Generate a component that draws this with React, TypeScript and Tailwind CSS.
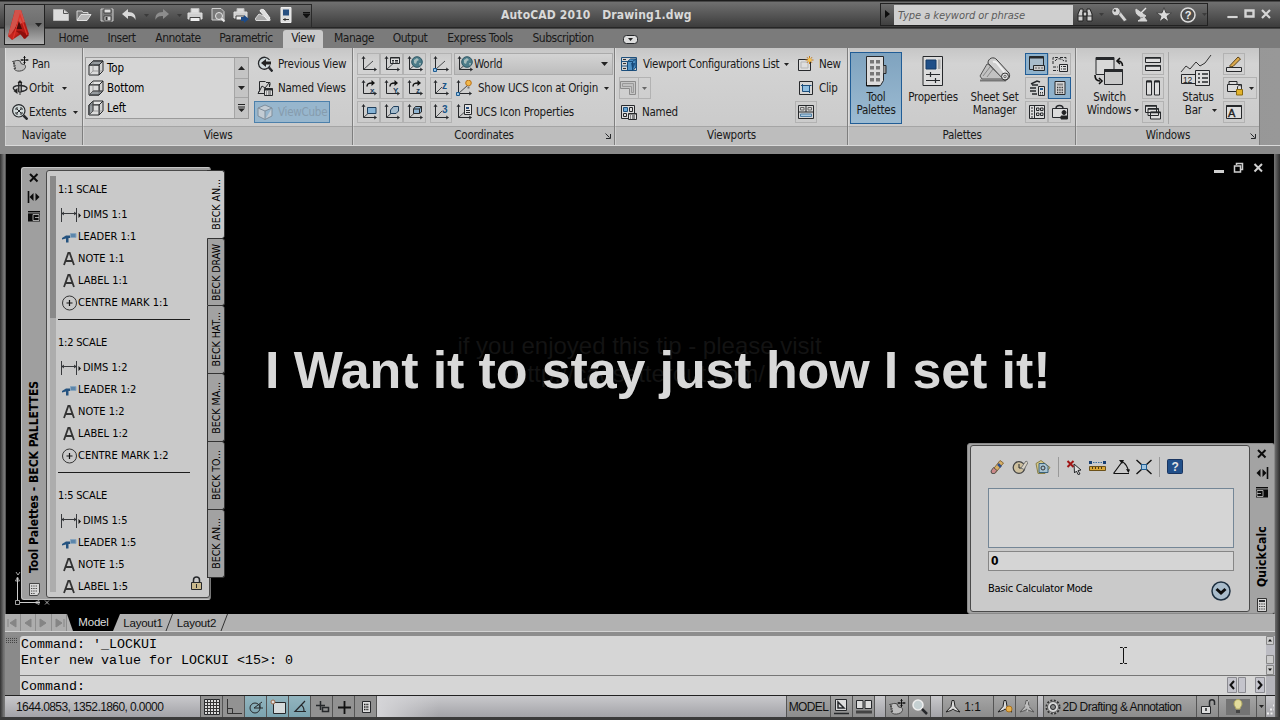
import type { ReactNode } from "react";

type IconProps = { w?: number; h?: number; className?: string; children?: ReactNode };

/* ------------------ ICON BASE ------------------ */
function Ico({ w = 16, h = 16, className = "", children }: IconProps) {
  return (
    <svg
      width={w}
      height={h}
      viewBox={`0 0 ${w} ${h}`}
      fill="none"
      stroke="#26282b"
      className={`shrink-0 ${className}`}
    >
      {children}
    </svg>
  );
}

function Caret({ className = "" }: { className?: string }) {
  return (
    <svg width="5" height="3" viewBox="0 0 5 3" className={`shrink-0 ${className}`}>
      <path d="M0 0h5L2.5 3z" fill="#222" />
    </svg>
  );
}

/* ------------------ QUICK ACCESS ICONS ------------------ */
const NewFile = () => (
  <Ico>
    <path d="M.5 2.500h10l5 4v7H.5z" fill="#dcdcdc" stroke="#bbb" />
    <path d="M10.500 2.500v4h5" stroke="#555" />
  </Ico>
);
const OpenFile = () => (
  <Ico>
    <path d="M1 13V4h5l1 1.500h5V8" fill="#777" stroke="#d5d5d5" />
    <path d="M1 13.500L5 7.500h10l-4 6z" fill="#b9b9b9" stroke="#e2e2e2" />
  </Ico>
);
const SaveFile = () => (
  <Ico>
    <path d="M2 2h12v12H2z" fill="#777" stroke="#ccc" />
    <path d="M5 2h7v4H5zM5 9h7v5H5z" fill="#ddd" stroke="#444" />
    <path d="M6.500 10h2v3h-2z" fill="#333" stroke="none" />
  </Ico>
);
const Undo = () => (
  <Ico>
    <path d="M1 7l6-5v3c6 0 8 3 7.500 8C13 9.500 11 9 7 9v3z" fill="#d8d8d8" stroke="none" />
  </Ico>
);
const Redo = () => (
  <Ico>
    <path d="M15 7L9 2v3C3 5 1 8 1.500 13 3 9.500 5 9 9 9v3z" fill="#8d8d8d" stroke="none" />
  </Ico>
);
const Printer = () => (
  <Ico>
    <path d="M4 1.500h8V6H4z" fill="#e0e0e0" stroke="#bbb" />
    <path d="M1 6h14v6H1z" fill="#cfcfcf" stroke="#e2e2e2" />
    <path d="M3 10.500h10v4H3z" fill="#eee" stroke="#444" />
  </Ico>
);
const Preview = () => (
  <Ico>
    <path d="M2 1.500h9l3 3V13H2z" fill="#777" stroke="#d0d0d0" />
    <circle cx="9" cy="9" r="3.500" fill="#888" stroke="#e6e6e6" />
    <path d="M11.500 11.500l3 3" stroke="#e6e6e6" strokeWidth="2" />
  </Ico>
);
const Publish = () => (
  <Ico>
    <path d="M4 1.500h7V5H4z" fill="#ddd" stroke="#bbb" />
    <path d="M1 5h13v6H1z" fill="#cfcfcf" stroke="#e2e2e2" />
    <path d="M3 9h8v4H3z" fill="#eee" stroke="#444" />
    <path d="M8 10h3V8l5 4-5 4v-2H8z" fill="#1d4a86" stroke="none" />
  </Ico>
);
const SheetSetSmall = () => (
  <Ico>
    <path d="M0 12l4-5 11 5v1.500H1z" fill="#a8a8a8" stroke="#dadada" />
    <path d="M5 4c0-2 3-2 4-1l6 8-2 2.500z" fill="#ddd" stroke="#f0f0f0" />
  </Ico>
);
const PropsSmall = () => (
  <Ico w={14}>
    <path d="M2 .5h10v15H2z" fill="#ddd" stroke="#eee" />
    <path d="M4 2.500h6v6H4z" fill="#274f80" stroke="none" />
    <path d="M4 12.500h6M6 11v3" stroke="#333" />
  </Ico>
);

/* ------------------ RIBBON ICONS ------------------ */
const Hand = () => (
  <>
    <path
      d="M.5 5.500L3 5c2-1 4-.5 5 0l1.500 3 3 .5c1 1 1.500 2.500.5 4-1.500 2-5 3-7.500 2.500-1.500-.5-3-1-3.500-2.500l2-.2L1.500 10l2-.2L1 7.500l2-.2z"
      fill="#bdbdbd"
      stroke="#444"
    />
    <path d="M12.500 0v8M8.500 4h8M11.500 1.500h2M11.500 6.500h2M10 3v2M15 3v2" stroke="#111" />
  </>
);
const Pan = () => (
  <Ico w={17}>
    <Hand />
  </Ico>
);
const Orbit = () => (
  <Ico>
    <path d="M8 2v13M6.500 2h3v10h-3z" fill="#d8d8d8" stroke="#222" strokeWidth=".9" />
    <path d="M5.500 3L8 0l2.500 3z" fill="#222" stroke="none" />
    <path d="M3.500 10.500C-1 8 2 5.500 8 5.500s10 3 4 5.500l-3 .5" strokeWidth="1.300" />
    <path d="M5.500 8v6L1.500 11z" fill="#222" stroke="none" />
  </Ico>
);
const Extents = () => (
  <Ico>
    <circle cx="6.800" cy="6.800" r="6.200" fill="#d2dada" strokeWidth="1.200" />
    <path d="M4 6V4h2M8 4h2v2M10 8v2H8M6 10H4V8M5 5l4 4M9 5L5 9" />
    <path d="M11.500 11.500l4 4" strokeWidth="2.500" />
  </Ico>
);
const CUBE_FACE = {
  top: "M1 5L5 1h10l-4 4z",
  bottom: "M1 15l4-4h10l-4 4z",
  left: "M1 5l4-4v10l-4 4z",
};
function Cube({ face }: { face: keyof typeof CUBE_FACE }) {
  return (
    <Ico>
      <path d="M1 5L5 1h10l-4 4z" fill="#e4e4e4" />
      <path d="M11 5l4-4v10l-4 4z" fill="#d2d2d2" />
      <path d="M1 5h10v10H1z" fill="#dcdcdc" />
      <path d={CUBE_FACE[face]} fill="#858b90" fillOpacity=".8" />
      <path d="M5 1v10h10M5 11l-4 4" stroke="#777" strokeWidth=".6" />
    </Ico>
  );
}
const PrevView = () => (
  <Ico>
    <path d="M12.500 4A6 6 0 1 0 13 9.500" fill="#d0dadd" strokeWidth="1.300" />
    <path d="M4 7l5-4v2.500h5v3H9V11z" fill="#222" stroke="none" />
    <path d="M12 11.500l3.500 4" strokeWidth="2.500" />
  </Ico>
);
const NamedViews = () => (
  <Ico>
    <path d="M7 13.500H1l1.500-3V1.500h6M12.500 4v3" />
    <path d="M2 12l3-6 3 2 4-5M9 2.500h4v3" />
    <path d="M7.500 8.500h8v7h-8z" fill="#ddd" />
    <path d="M7.500 9.500h8" strokeWidth="2" />
    <path d="M9 12h1M11 12h3M9 14h1M11 14h3" strokeWidth=".8" />
  </Ico>
);
const ViewCubeIcon = () => (
  <Ico>
    <path d="M1 4l7-3 7 3-7 3zM1 4v8l7 3.500V7M15 4v8l-7 3.500" fill="#c3ccd4" stroke="#7f8e9c" />
  </Ico>
);
const Globe = ({ cx, cy, r }: { cx: number; cy: number; r: number }) => (
  <>
    <circle cx={cx} cy={cy} r={r} fill="#4c7c89" stroke="#2e5866" />
    <path
      d={`M${cx - 3} ${cy - 2}l3-2 2 2-2 1-1 3-2-1zM${cx + 2} ${cy + 1}l2 0-1 3z`}
      fill="#a6bcbc"
      stroke="none"
    />
  </>
);

const UCS_EXTRA: Record<string, ReactNode> = {
  plain: null,
  named: (
    <>
      <path d="M6.500 1.500h9v6h-9z" fill="#e2e2e2" />
      <path d="M6.500 2h9M8 4.500h2M11 4.500h3M8 6h2M11 6h3" />
    </>
  ),
  world: <Globe cx={10} cy={6} r={5.300} />,
  origin: <path d="M.5 12.500h3v3h-3z" fill="#9fc4e0" stroke="#1d5c93" />,
  view: <path d="M6.500 3.500h8.500v6H6.500z" fill="#86b3d6" stroke="#1f3f5c" />,
  object: <path d="M6.500 6l3-3.500h5v4.500L12 9.500H6.500z" fill="#a5bccd" stroke="#1f3f5c" />,
  face: <path d="M6.500 5l2-2.500h6V8l-2 1.500h-6zM6.500 5h6v4.500M12.500 5l2-2.500" fill="#8fb4d2" />,
  show: (
    <>
      <path d="M.5 12.500h3v3h-3z" fill="#9fc4e0" stroke="#1d5c93" />
      <circle cx="12.500" cy="3" r="2.800" fill="#f2b84a" stroke="#b9731b" />
      <path d="M11.500 6.500h2v2h-2z" fill="#777" stroke="none" />
    </>
  ),
  props: (
    <>
      <path d="M8.500.5h7v10h-7z" fill="#e2e2e2" />
      <path d="M10 3h3v2h-3z" fill="#274f80" stroke="none" />
      <path d="M10 6.500h4M10 8.500h4" />
    </>
  ),
};
const Axes = () => (
  <>
    <path d="M2.500 1v12.500H15" />
    <path d="M1 3L2.500.5 4 3M13 12l2.500 1.500L13 15" strokeWidth=".9" />
  </>
);
function Ucs({ kind }: { kind: string }) {
  return (
    <Ico>
      <Axes />
      <path d="M2.500 13.500L12 5" strokeWidth=".8" />
      {UCS_EXTRA[kind]}
    </Ico>
  );
}
function UcsLetter({ letter, rotate }: { letter: string; rotate?: boolean }) {
  return (
    <Ico>
      <Axes />
      {rotate ? (
        <>
          <path d="M6 6.500c0-3 1.500-3.500 5-3.500" stroke="#111" strokeWidth="1.500" />
          <path d="M10.500 0l3.500 3-3.500 3z" fill="#111" stroke="none" />
        </>
      ) : (
        <path d="M2.500 13.500L9 7" strokeWidth=".8" />
      )}
      <text
        x={rotate ? 9 : 9}
        y={rotate ? 12.500 : 8.500}
        fontSize={rotate ? 8 : 10}
        fontWeight="bold"
        fontFamily="Liberation Sans"
        fill={rotate ? "#24425f" : "#1c5588"}
        stroke="none"
      >
        {letter}
      </text>
    </Ico>
  );
}

const VpConfig = () => (
  <Ico>
    <path d="M.5 1.500h15v13H.5zM.5 5.500h6M.5 10h6" fill="#d4d4d4" stroke="#1d4f7c" />
    <path d="M2 3.500h3M2 7.500h3M2 12.500h3" stroke="#333" />
    <path d="M6.500 5.500L9.500 3H15v8l-3 3.500H6.500z" fill="#4d90c4" stroke="#174a78" />
    <path d="M10 7h4.500l-3 7.500" fill="#1d5488" stroke="none" />
    <path d="M6.500 5.500h5v9M11.500 5.500L15 3" stroke="#174a78" />
  </Ico>
);
const Polygonal = () => (
  <Ico>
    <path d="M.5 1.500h15v13h-6v-6h-9z" fill="#c6c6c6" stroke="#8b8b8b" />
    <path d="M2.500 3.500h11v9h-2v-6h-9z" fill="#c0c0c0" stroke="#999" />
  </Ico>
);
const NamedVp = () => (
  <Ico>
    <path d="M.5 1.500h13v13H.5z" fill="#ddd" />
    <path d="M2.500 3.500h4v4h-4z" fill="#6ba8d6" stroke="#1d4f7c" />
    <path d="M8.500 3.500h3v4h-3zM2.500 9.500h3v3h-3z" />
    <path d="M7.500 9.500h8v6h-8z" fill="#e2e2e2" />
    <path d="M7.500 10h8M9 12h1M11 12h3M9 14h1M11 14h3" />
  </Ico>
);
const NewVp = () => (
  <Ico>
    <path d="M.5 3.500h12v11H.5z" fill="#dedede" />
    <path d="M3 6h7v6H3z" stroke="#b5b5b5" />
    <path d="M11.500 0v8M7.500 4h8M9 1.200l5 5.600M14 1.200L9 6.800" stroke="#c37a1a" />
    <circle cx="11.500" cy="4" r="2" fill="#f2c255" stroke="none" />
  </Ico>
);
const ClipVp = () => (
  <Ico>
    <path d="M1.500 1.500h13v13h-13z" fill="#d6d6d6" />
    <path d="M4.500 5.500h7v6h-7z" fill="#8fbfe3" stroke="#1d4f7c" />
    <path d="M3 5.500h2M4.500 4v2M10.500 5.500h3M11.500 11v2" stroke="#1d4f7c" />
  </Ico>
);
const JoinVp = () => (
  <Ico>
    <path d="M.5 1.500h15v13H.5zM.5 8h15M8 1.500V8" fill="#d6d6d6" />
    <path d="M2.500 3.500h3.500v2.500H2.500zM10 3.500h3.500v2.500H10z" stroke="#666" />
    <path d="M2.500 10h11v2.500h-11z" fill="#a9c7dd" stroke="#4e7ea5" />
  </Ico>
);
const ToolPalettesIcon = () => (
  <Ico w={22} h={32}>
    <path d="M1.500 1.500h17v24l-3 5h-14z" fill="#dcdcdc" />
    <path d="M18.500 10.500h2.500v8h-2.500" fill="#9a9a9a" />
    <path d="M1.500 27v4h13" stroke="#111" />
    {[5, 11, 17, 23].map((y) => (
      <path key={y} d={`M5 ${y}h4v3.500h-4zM11 ${y}h4v3.500h-4z`} fill="#777" stroke="none" />
    ))}
  </Ico>
);
const PropertiesIcon = () => (
  <Ico w={22} h={32}>
    <path d="M1 1.500h19.500v29H1z" fill="#dcdcdc" />
    <path d="M4 5h10v9H4z" fill="#1f4f88" stroke="#143a66" />
    <path d="M16 4.500h2.500v9.500H16z" fill="#aaa" stroke="none" />
    <path d="M4 19.500h14M8.500 17v5M4 25.500h14M13.500 23v5" strokeWidth="1.200" />
  </Ico>
);
const SheetSetIcon = () => (
  <Ico w={32} h={28}>
    <path d="M1 20L8 8l5 1 13 14H3z" fill="#c2c2c2" stroke="#555" />
    <path d="M1 24.500h26" stroke="#777" strokeWidth="2" />
    <path d="M4 20l7-9M8 21l6-8" stroke="#888" />
    <path d="M9 7c0-5 6-7 9-3l12 13c2 4-1 8-5 7z" fill="#cfcfcf" stroke="#3c3c3c" />
    <path d="M14 6c2-1 3 0 4 1l9 11" stroke="#efefef" strokeWidth="2" />
    <path d="M9 7c1 3 4 5 7 8l8 8" stroke="#666" />
    <circle cx="26" cy="20.500" r="3.500" fill="#ddd" stroke="#333" />
    <circle cx="26" cy="20.500" r="1.200" stroke="#666" />
  </Ico>
);
const CmdLine = () => (
  <Ico>
    <path d="M.5.5h14v13H.5z" fill="#a8bccb" />
    <path d="M.5 1.500h14" strokeWidth="2" />
    <path d="M4.500 9.500h11v5h-11z" fill="#c9c9c9" />
    <path d="M6 12h8" stroke="#666" strokeDasharray="2 1" />
  </Ico>
);
const Markup = () => (
  <Ico>
    <path d="M1 8V1.500h5M8 1.500h6V6M1 14.500h5M3 5c2-3 6-3 9 0M1 11h5" strokeDasharray="3 1.200" />
    <path d="M7.500 8.500h8v7h-8z" fill="#ddd" />
    <path d="M9 10.500h1M11 10.500h3M9 13h1M11 13h3" />
  </Ico>
);
const DesignCenter = () => (
  <Ico>
    <path d="M2 4l6-3 3 1M1 8h6M3 5h6M1 11h6M3 14h5" strokeWidth="1.400" />
    <path d="M9.500 6.500h6v9h-6z" fill="#ddd" />
    <path d="M11 8h3v2h-3z" fill="#235a8f" stroke="none" />
    <path d="M11 12.500h3M11 14h3" stroke="#333" strokeDasharray="1 1" />
  </Ico>
);
const CalcIcon = () => (
  <Ico>
    <path d="M3 1.500h10v13H3z" fill="#d5d5d5" />
    <path d="M5 3.500h6v2H5z" fill="#888" stroke="none" />
    <path d="M5 7.500h6M5 10h6M5 12.500h6" stroke="#333" strokeDasharray="1.300 1" strokeWidth="1.300" />
  </Ico>
);
const ExtRef = () => (
  <Ico>
    <path d="M.5 1.500h15v13H.5zM5.500 1.500v13" fill="#dcdcdc" />
    <path d="M2 4h2M2 7h2M2 10h2M2 13h2M7.500 4h2.500v2.500H7.500zM11.500 4H14v2.500h-2.500zM7.500 9h2.500v2.500H7.500zM11.500 9H14v2.500h-2.500z" />
  </Ico>
);
const Clipboard = () => (
  <Ico>
    <path d="M.5 4.500h15v9H.5z" fill="#dcdcdc" />
    <path d="M4 4.500c0-4 7-4 7 0" strokeWidth="1.500" />
    <circle cx="12" cy="8.500" r="2" fill="#222" />
    <path d="M9 15v-3h6.500v3z" fill="#222" />
  </Ico>
);
const SwitchWindowsIcon = () => (
  <Ico w={32} h={30}>
    <path d="M2 1.500h18v17H2z" fill="#d8d8d8" />
    <path d="M2 2.500h18" strokeWidth="3" />
    <path d="M10.500 13.500h18v15h-18z" fill="#c9c9c9" />
    <path d="M10.500 14.500h18" strokeWidth="3" />
    <path d="M28.500 10c0-3-1-5-5-5M26 2l-3 3 3 3M1 19c0 4 2 6 5 6M5 22l3 3-3 3" stroke="#111" strokeWidth="1.600" />
  </Ico>
);
const TileH = () => (
  <Ico>
    <path d="M.5 1.500h15v5H.5zM.5 9.500h15v5H.5z" fill="#dedede" />
    <path d="M.5 2h15M.5 10h15" strokeWidth="1.500" />
  </Ico>
);
const TileV = () => (
  <Ico>
    <path d="M1.500 1h5v14h-5zM9.500 1h5v14h-5z" fill="#dedede" />
    <path d="M1.500 1.500h5M9.500 1.500h5" strokeWidth="2" />
  </Ico>
);
const Cascade = () => (
  <Ico>
    <path d="M.5 1.500h11v7H.5zM3 4.500h10.500v7H3zM5.500 8h10v7h-10z" fill="#dedede" />
    <path d="M.5 2h11M3 5h10.500M5.500 8.500h10" strokeWidth="1.500" />
  </Ico>
);
const StatusBarIcon = () => (
  <Ico w={32} h={32}>
    <path d="M1 17l5-6 4 3 6-7 4 4 5-3 6-8" stroke="#333" />
    <path d="M1.500 19.500h14v9h-14z" fill="#d8d8d8" />
    <text x="3" y="27.500" fontSize="8.500" fontFamily="Liberation Sans" fill="#222" stroke="none">
      12
    </text>
    <path d="M15.500 15.500h14v15h-14z" fill="#dcdcdc" />
    <path d="M18 19h2M22 19h6M18 23h2M22 23h6M18 27h2M22 27h6" strokeWidth="1.500" />
  </Ico>
);
const PencilBar = () => (
  <Ico>
    <path d="M.5 11.500h15v4H.5z" fill="#ddd" />
    <path d="M4 9.500L12 1l2.500 2L7 10.500l-3 .5z" fill="#dba94a" stroke="#5b431a" />
  </Ico>
);
const LockBar = () => (
  <Ico>
    <path d="M.5 4.500h14v7H.5zM2 4V1.500h8V4" fill="#ddd" />
    <path d="M9.500 9.500h6v5.500h-6z" fill="#e2b32c" stroke="#8a6a10" />
    <path d="M10.500 9V7c0-2 4-2 4 0v2" stroke="#333" />
  </Ico>
);
const TextWin = () => (
  <Ico>
    <path d="M.5 1.500h15v13H.5z" fill="#ddd" />
    <path d="M.5 2h15" strokeWidth="2" />
    <text x="2" y="13" fontSize="11" fontFamily="Liberation Sans" fill="#222" stroke="#222" strokeWidth=".4">
      A
    </text>
  </Ico>
);

/* ------------------ TITLE BAR ------------------ */
const TABS = [
  { name: "Home", cls: "w-[49px]" },
  { name: "Insert", cls: "w-[47px]" },
  { name: "Annotate", cls: "w-[66px]" },
  { name: "Parametric", cls: "w-[70px]" },
  { name: "View", cls: "mx-[2px] w-[40px]" },
  { name: "Manage", cls: "w-[58px]" },
  { name: "Output", cls: "w-[54px]" },
  { name: "Express Tools", cls: "w-[86px]" },
  { name: "Subscription", cls: "w-[80px]" },
];

function Header() {
  return (
    <header className="flex h-[48px] bg-[linear-gradient(#1c1c1c_0,#1c1c1c_1px,#707070_2px,#3c3c3c_27px,#111_28px,#7b7b7b_29px)]">
      <div className="mt-[4px] ml-[4px] flex h-[41px] w-[41px] shrink-0 items-center border border-[#222] bg-[linear-gradient(#7d7d7d,#6e6e6e_50%,#b3b3b3)]">
        <Ico w={28} h={36} className="ml-[2px]">
          <path d="M8 3h6l8 24-5 5-3-5-9 6-4-4z" fill="#b01a15" stroke="none" />
          <path d="M8 3h6l4 12-8 3-7 11H1z" fill="#d2524a" stroke="none" />
          <path d="M1 29l8-5 3 2-7 6z" fill="#c4251e" stroke="none" />
          <path d="M9 24h5l8 4-4 4-5-5z" fill="#8e0f0c" stroke="none" />
          <path d="M11.500 13l3.500 9H8z" fill="#4a0a09" stroke="none" />
          <path d="M6 32L13 8l7 20" stroke="#e0342a" strokeWidth="1.200" />
        </Ico>
        <svg width="7" height="4" className="shrink-0">
          <path d="M0 0h7L3.500 4z" fill="#222" />
        </svg>
      </div>
      <div className="flex min-w-0 flex-1 flex-col">
        <div className="flex h-[29px] pt-[4px]">
          <div className="flex h-[24px] w-[267px] items-center border border-l-0 border-[#2a2a2a] pl-[8px] [&>svg]:mb-[2px]">
            <NewFile />
            <span className="w-[7px]" />
            <OpenFile />
            <span className="w-[7px]" />
            <SaveFile />
            <span className="w-[6px]" />
            <Undo />
            <Caret className="ml-[7px] opacity-50" />
            <span className="w-[5px]" />
            <Redo />
            <Caret className="ml-[7px] opacity-50" />
            <span className="w-[5px]" />
            <Printer />
            <span className="w-[7px]" />
            <Preview />
            <span className="w-[7px]" />
            <Publish />
            <span className="w-[6px]" />
            <SheetSetSmall />
            <span className="w-[8px]" />
            <PropsSmall />
            <svg width="7" height="6" className="ml-[10px] shrink-0">
              <path d="M0 .5h7M0 2h7L3.500 6z" fill="#111" stroke="#111" />
            </svg>
          </div>
          <div className="w-[568px] pt-[3px] pl-[189px] font-['DejaVu_Sans_Condensed',sans-serif] text-[12px] leading-[16px] font-bold tracking-[0.15px] whitespace-pre text-[#d9d9d9]">
            AutoCAD 2010   Drawing1.dwg
          </div>
          <div className="-mt-[1px] flex h-[23px] w-[328px] items-center border border-[#222]">
            <svg width="13" height="9" className="shrink-0">
              <path d="M4 0v8l5-4z" fill="#0d0d0d" />
            </svg>
            <div className="h-[20px] w-[179px] bg-[#cfcfcf] pl-[4px] text-[11px] leading-[21px] tracking-[-0.05px] text-[#5b5b5b] italic">
              Type a keyword or phrase
            </div>
            <Ico className="ml-[4px]">
              <path d="M1 14V7l2-5h3v12zM15 14V7l-2-5h-3v12zM6 5h4v4H6z" fill="#cfcfcf" stroke="#222" />
              <path d="M1 9h5M10 9h5" stroke="#333" />
            </Ico>
            <Caret className="ml-[6px] opacity-50" />
            <Ico className="ml-[7px]">
              <path d="M6 6l7 8.500 3-1.500-7-9z" fill="#d5d5d5" stroke="#444" strokeWidth=".5" />
              <circle cx="5" cy="4.500" r="4.200" fill="#d5d5d5" stroke="#333" strokeWidth=".6" />
              <circle cx="3.800" cy="3.500" r="1.200" fill="#444" stroke="none" />
            </Ico>
            <Ico className="ml-[7px]">
              <path d="M2 2c-1 6 4 9 10 7zM7 8v4M4 14h9l-3-4z" fill="#d5d5d5" stroke="#d5d5d5" />
              <path d="M7 6l5-5" stroke="#e5e5e5" strokeWidth="1.500" />
            </Ico>
            <Ico className="ml-[6px]">
              <path d="M8 .5l2 5.300h5.500L11 9.300l2 5.700-5-3.500L3 15l2-5.700L.5 5.800H6z" fill="#dadada" stroke="#444" />
            </Ico>
            <Ico className="ml-[8px]">
              <circle cx="8" cy="8" r="7" fill="#4d4d4d" stroke="#dedede" strokeWidth="1.500" />
              <text x="4.800" y="12" fontSize="11" fontWeight="bold" fontFamily="Liberation Sans" fill="#eee" stroke="none">
                ?
              </text>
            </Ico>
            <Caret className="ml-[6px] opacity-50" />
          </div>
          <Ico w={46} h={14} className="mt-[3px] ml-[19px]">
            <path d="M0 8.500h11v3H0z" fill="#d5d5d5" stroke="#333" strokeWidth=".6" />
            <path d="M18.500 3.500h8v6h-8z" stroke="#d5d5d5" strokeWidth="2.400" />
            <path d="M35 3l8 8M43 3l-8 8" stroke="#d5d5d5" strokeWidth="2.200" />
          </Ico>
        </div>
        <nav className="flex h-[19px] items-end pl-[4px] text-center text-[12px] text-[#191919]">
          {TABS.map((t) => (
            <div
              key={t.name}
              className={`h-[18px] leading-[17px] tracking-[-0.5px] whitespace-nowrap ${t.cls} ${
                t.name === "View" ? "rounded-t-[3px] bg-[#cbcbcb]" : ""
              }`}
            >
              {t.name}
            </div>
          ))}
          <Ico w={15} h={9} className="mb-[4px] ml-[20px]">
            <rect x=".5" y=".5" width="14" height="8" rx="3" fill="#ddd" />
            <path d="M5 3h5L7.500 6z" fill="#222" stroke="none" />
          </Ico>
        </nav>
      </div>
    </header>
  );
}

/* ------------------ RIBBON ------------------ */
function Panel({
  title,
  className,
  arrow,
  children,
}: {
  title: string;
  className: string;
  arrow?: boolean;
  children: ReactNode;
}) {
  return (
    <section className={`flex shrink-0 flex-col border-r border-[#7e7e7e] ${className}`}>
      <div className="flex h-[78px] border-l border-[#dcdcdc] bg-[linear-gradient(#c6c6c6,#d3d3d3_20%,#cbcbcb)] pt-[4px]">
        {children}
      </div>
      <div className="flex h-[19px] items-center border-t border-l border-[#d0d0d0] border-t-[#a5a5a5] bg-[#bdbdbd]">
        <span className="flex-1 text-center">{title}</span>
        {arrow && (
          <Ico w={6} h={6} className="mr-[3px] -ml-[9px]">
            <path d="M.5.5l4 4M5.500 1v4.500H1" />
          </Ico>
        )}
      </div>
    </section>
  );
}

function Row({ className = "", children }: { className?: string; children: ReactNode }) {
  return (
    <div className={`flex h-[24px] items-center whitespace-nowrap [&>span]:pt-[2px] ${className}`}>
      {children}
    </div>
  );
}

function Cell({ active, className = "w-[23px]", children }: { active?: boolean; className?: string; children: ReactNode }) {
  return (
    <div
      className={`flex h-[22px] items-center justify-center border ${className} ${
        active ? "border-[#215d96] bg-[#8fb2cc]" : "border-[#b2b2b2]"
      }`}
    >
      {children}
    </div>
  );
}

const VIEWS = ["top", "bottom", "left"] as const;
const VIEW_LABEL = { top: "Top", bottom: "Bottom", left: "Left" };

function Ribbon() {
  return (
    <div className="h-[106px] bg-[#8a8a8a] pl-[5px] text-[11.5px] tracking-[-0.25px] text-[#1a1a1a]">
      <div className="flex h-[98px] border-b border-[#dadada] bg-[linear-gradient(90deg,#7d7d7d,#989898)]">
        <Panel title="Navigate" className="w-[78px]">
          <div className="pl-[6px]">
            <Row>
              <Pan />
              <span className="ml-[3px]">Pan</span>
            </Row>
            <Row>
              <Orbit />
              <span className="ml-[1px]">Orbit</span>
              <Caret className="ml-[8px]" />
            </Row>
            <Row>
              <Extents />
              <span className="ml-[1px]">Extents</span>
              <Caret className="ml-[7px]" />
            </Row>
          </div>
        </Panel>

        <Panel title="Views" className="w-[270px]">
          <div className="mt-[5px] ml-[1px] flex h-[62px] w-[164px] border border-[#9a9a9a] bg-[#d6d6d6] text-black">
            <div className="flex-1 pl-[2px]">
              {VIEWS.map((v) => (
                <div key={v} className="flex h-[20px] items-center gap-[3px]">
                  <Cube face={v} />
                  <span className="pt-[2px] tracking-[-0.1px]">{VIEW_LABEL[v]}</span>
                </div>
              ))}
            </div>
            <div className="grid w-[14px] grid-rows-3 border-l border-[#a5a5a5] bg-[#c4c4c4] [&>*]:flex [&>*]:items-center [&>*]:justify-center">
              <div>
                <svg width="7" height="4"><path d="M0 4h7L3.500 0z" fill="#222" /></svg>
              </div>
              <div className="border-y border-[#a5a5a5]">
                <svg width="7" height="4"><path d="M0 0h7L3.500 4z" fill="#222" /></svg>
              </div>
              <div>
                <svg width="7" height="8"><path d="M0 0h7v1H0zM0 2.500h7v1H0zM0 4.500h7L3.500 8z" fill="#222" /></svg>
              </div>
            </div>
          </div>
          <div className="ml-[5px]">
            <Row className="pl-[3px]">
              <PrevView />
              <span className="ml-[5px]">Previous View</span>
            </Row>
            <Row className="pl-[3px]">
              <NamedViews />
              <span className="ml-[5px]">Named Views</span>
            </Row>
            <Row>
              <div className="flex h-[22px] w-[76px] items-center border border-[#4c80ab] bg-[#97b6cd] pl-[2px] text-[#869cad]">
                <ViewCubeIcon />
                <span className="ml-[5px] pt-[2px]">ViewCube</span>
              </div>
            </Row>
          </div>
        </Panel>

        <Panel title="Coordinates" className="w-[262px]" arrow>
          <div className="ml-[3px] grid w-[69px] grid-cols-3 content-start gap-y-[2px] pt-[1px]">
            <Cell><Ucs kind="plain" /></Cell>
            <Cell><Ucs kind="named" /></Cell>
            <Cell><Ucs kind="world" /></Cell>
            <Cell><UcsLetter letter="x" rotate /></Cell>
            <Cell><UcsLetter letter="Y" rotate /></Cell>
            <Cell><UcsLetter letter="z" rotate /></Cell>
            <Cell><Ucs kind="view" /></Cell>
            <Cell><Ucs kind="object" /></Cell>
            <Cell><Ucs kind="face" /></Cell>
          </div>
          <div className="ml-[4px] grid w-[22px] content-start gap-y-[2px] pt-[1px]">
            <Cell className="w-[22px]"><Ucs kind="origin" /></Cell>
            <Cell className="w-[22px]"><UcsLetter letter="z" /></Cell>
            <Cell className="w-[22px]"><UcsLetter letter="3" /></Cell>
          </div>
          <div className="ml-[2px]">
            <Row>
              <div className="flex h-[22px] w-[159px] items-center border border-[#aaa] bg-[linear-gradient(#d4d4d4,#bdbdbd)] pl-[2px]">
                <Ucs kind="world" />
                <span className="ml-[1px] flex-1 pt-[2px]">World</span>
                <svg width="7" height="4" className="mr-[4px]"><path d="M0 0h7L3.500 4z" fill="#222" /></svg>
              </div>
            </Row>
            <Row className="pl-[2px]">
              <Ucs kind="show" />
              <span className="ml-[6px]">Show UCS Icon at Origin</span>
              <Caret className="ml-[6px]" />
            </Row>
            <Row className="pl-[2px]">
              <Ucs kind="props" />
              <span className="ml-[4px] tracking-[-0.2px]">UCS Icon Properties</span>
            </Row>
          </div>
        </Panel>

        <Panel title="Viewports" className="w-[233px]">
          <div className="ml-[3px] w-[176px] pl-[2px]">
            <Row>
              <VpConfig />
              <span className="ml-[6px] tracking-[-0.35px]">Viewport Configurations List</span>
              <Caret className="ml-[5px]" />
            </Row>
            <Row>
              <div className="-ml-[2px] flex h-[22px] w-[32px] items-center border border-[#b2b2b2]">
                <Polygonal />
                <span className="ml-[2px] h-full w-px bg-[#b2b2b2]" />
                <Caret className="ml-[3px] opacity-60" />
              </div>
            </Row>
            <Row>
              <NamedVp />
              <span className="ml-[5px]">Named</span>
            </Row>
          </div>
          <div>
            <Row className="pl-[3px]">
              <NewVp />
              <span className="ml-[5px]">New</span>
            </Row>
            <Row className="pl-[3px]">
              <ClipVp />
              <span className="ml-[5px]">Clip</span>
            </Row>
            <Row>
              <Cell className="w-[22px]"><JoinVp /></Cell>
            </Row>
          </div>
        </Panel>

        <Panel title="Palettes" className="w-[228px]">
          <div className="ml-[1px] flex h-[72px] w-[52px] flex-col items-center border border-[#215d96] bg-[linear-gradient(#7fa3bf,#9cbbd2)] pt-[2px] text-center leading-[13px]">
            <ToolPalettesIcon />
            <div className="mt-[4px]">Tool<br />Palettes</div>
          </div>
          <div className="flex w-[62px] flex-col items-center pt-[3px] leading-[13px]">
            <PropertiesIcon />
            <div className="mt-[4px]">Properties</div>
          </div>
          <div className="flex w-[61px] flex-col items-center pt-[4px] text-center leading-[13px] whitespace-nowrap">
            <SheetSetIcon />
            <div className="mt-[7px]">Sheet Set<br />Manager</div>
          </div>
          <div className="grid w-[46px] grid-cols-2 content-start gap-y-[2px] pt-[1px]">
            <Cell active><CmdLine /></Cell>
            <Cell><Markup /></Cell>
            <Cell><DesignCenter /></Cell>
            <Cell active><CalcIcon /></Cell>
            <Cell><ExtRef /></Cell>
            <Cell><Clipboard /></Cell>
          </div>
        </Panel>

        <Panel title="Windows" className="w-[184px]" arrow>
          <div className="flex w-[65px] flex-col items-center pt-[4px] text-center leading-[13px] whitespace-nowrap">
            <SwitchWindowsIcon />
            <div className="mt-[5px]">
              Switch
              <div className="ml-[7px] flex items-center gap-[3px]">
                Windows
                <Caret />
              </div>
            </div>
          </div>
          <div className="grid w-[22px] content-start gap-y-[2px] pt-[1px]">
            <Cell className="w-[22px]"><TileH /></Cell>
            <Cell className="w-[22px]"><TileV /></Cell>
            <Cell className="w-[22px]"><Cascade /></Cell>
          </div>
          <div className="ml-[4px] h-[72px] w-px bg-[#a8a8a8]" />
          <div className="flex w-[54px] flex-col items-center pt-[3px] text-center leading-[13px]">
            <StatusBarIcon />
            <div className="mt-[4px] ml-[4px]">
              Status
              <div className="-mr-[3px] flex items-center justify-end gap-[10px]">
                Bar
                <Caret />
              </div>
            </div>
          </div>
          <div className="grid content-start gap-y-[2px] pt-[1px]">
            <Cell className="w-[22px]"><PencilBar /></Cell>
            <Cell className="w-[34px] gap-[6px]">
              <LockBar />
              <Caret />
            </Cell>
            <Cell className="w-[22px]"><TextWin /></Cell>
          </div>
        </Panel>
      </div>
    </div>
  );
}

/* ------------------ TOOL PALETTES ------------------ */
const SCALES = ["1:1", "1:2", "1:5"];
const PALETTE_TABS = ["BECK AN...", "BECK DRAW", "BECK HAT...", "BECK MA...", "BECK TO...", "BECK AN..."];

const AText = () => (
  <Ico w={14} h={16}>
    <path d="M2 14L6.300 2h1.400L12 14M3.500 10h7" stroke="#333" strokeWidth="1.800" />
  </Ico>
);

function ScaleGroup({ scale, last }: { scale: string; last: boolean }) {
  return (
    <div className="h-[153px] shrink-0">
      <div className="mb-[3px] h-[22px] leading-[22px] tracking-[-0.2px]">{scale} SCALE</div>
      <div className="flex h-[22px] items-center pl-[3px]">
        <Ico w={22} h={14}>
          <path d="M.5 0v14M15.500 0v14M1 5.500h14M3 4L1 5.500 3 7M13 4l2 1.500L13 7" strokeWidth=".9" />
          <path d="M17.500 5v5L20 7.500z" fill="#111" stroke="none" />
        </Ico>
        DIMS {scale}
      </div>
      <div className="flex h-[22px] items-center pl-[4px]">
        <Ico w={16} h={14}>
          <path d="M0 8l4-2.500h4V8H6.500v4.500H4V8.500L0 9.500z" fill="#24527f" stroke="none" />
          <path d="M8.500 3.500h5.500v4H8.500z" fill="#5c86ab" stroke="#88a5bd" />
        </Ico>
        LEADER {scale}
      </div>
      <div className="flex h-[22px] items-center gap-[2px] pl-[4px]">
        <AText />
        NOTE {scale}
      </div>
      <div className="flex h-[22px] items-center gap-[2px] pl-[4px]">
        <AText />
        LABEL {scale}
      </div>
      {!last && (
        <>
          <div className="flex h-[22px] items-center pl-[4px]">
            <Ico w={16} h={16}>
              <circle cx="7.500" cy="8" r="7" stroke="#333" />
              <path d="M4.500 8h6M7.500 5v6" stroke="#111" strokeWidth="1.200" />
            </Ico>
            <span className="whitespace-nowrap">CENTRE MARK {scale}</span>
          </div>
          <div className="mt-[5px] h-px w-[132px] bg-[#1c1c1c]" />
        </>
      )}
    </div>
  );
}

function SideIcons({ flip }: { flip?: boolean }) {
  return (
    <>
      <Ico w={10} h={10}>
        <path d="M1 1l7.500 7.500M8.500 1L1 8.500" stroke="#0c0c0c" strokeWidth="2" />
      </Ico>
      <Ico w={14} h={12} className={`mt-[8px] ${flip ? "-scale-x-100" : ""}`}>
        <path d="M1.500 0v12" stroke="#0c0c0c" strokeWidth="1.600" />
        <path d="M2.500 6l4-4v8zM12.500 6l-4-4v8z" fill="#0c0c0c" stroke="none" />
      </Ico>
      <Ico w={12} h={12} className={`mt-[7px] ${flip ? "-scale-x-100" : ""}`}>
        <path d="M0 1h12v10.500H0z" fill="#0c0c0c" stroke="none" />
        <path d="M0 2.900h12M5 4.500h6v6H5zM7 7.500h4" stroke="#b5b5b5" strokeWidth=".9" />
      </Ico>
    </>
  );
}

function ToolPalette() {
  return (
    <div className="absolute top-[13px] left-[15px] flex items-start text-[11px] text-black">
      <div className="flex h-[433px] w-[190px] rounded-[3px] border border-[#c5c5c5] border-r-[#777] bg-[#9f9f9f]">
        <div className="flex w-[24px] flex-col items-center pt-[5px]">
          <SideIcons />
          <div className="mt-[153px] h-[198px] -rotate-180 text-[12px] leading-[14px] font-bold whitespace-nowrap [writing-mode:vertical-rl]">
            Tool Palettes - BECK PALLETTES
          </div>
          <Ico w={11} h={14} className="mt-[9px]">
            <path d="M.5 1.500h10v9l-2 3h-8z" fill="#d8d8d8" stroke="#444" />
            <path d="M2 4h6M2 6.500h6M2 9h6M2 11.500h4" stroke="#444" strokeDasharray="1.300 1" />
          </Ico>
        </div>
        <div className="mt-[2px] flex h-[428px] w-[164px] rounded-[3px] border border-[#4a4a4a] bg-[#c9c9c9] pl-[3px]">
          <div className="mt-[5px] h-[416px] w-[6px] bg-[#adadad]">
            <div className="h-[142px] bg-[#898989]" />
          </div>
          <div className="ml-[2px] h-[424px] flex-1 overflow-hidden pt-[8px]">
            {SCALES.map((s) => (
              <ScaleGroup key={s} scale={s} last={s === "1:5"} />
            ))}
          </div>
          <Ico w={11} h={15} className="mt-[405px] mr-[7px] -ml-[14px]">
            <path d="M2.500 7V4c0-4 6-4 6 0v3" strokeWidth="1.500" />
            <path d="M.5 6.500h10v7H.5z" fill="#c9b98c" />
            <path d="M5.500 8v4" />
          </Ico>
        </div>
      </div>
      <div className="mt-[3px] -ml-[4px] w-[18px]">
        {PALETTE_TABS.map((t, i) => (
          <div
            key={i}
            className={`flex h-[68px] w-[18px] items-center justify-center rounded-r-[3px] border-r border-b border-[#333] ${
              i === 0 ? "border-t border-b-0 bg-[#c9c9c9]" : "border-l bg-[#a2a2a2]"
            } ${i === 1 ? "border-t" : ""}`}
          >
            <span className="-rotate-180 text-[10.5px] leading-[14px] whitespace-nowrap [writing-mode:vertical-rl]">
              {t}
            </span>
          </div>
        ))}
      </div>
    </div>
  );
}

/* ------------------ QUICKCALC ------------------ */
function QuickCalc() {
  return (
    <div className="absolute top-[289px] left-[961px] flex h-[171px] w-[308px] rounded-[3px] border border-[#8a8a8a] bg-[#a3a3a3] text-[11px] text-black">
      <div className="mt-[1px] ml-[2px] h-[167px] w-[280px] rounded-[3px] border border-[#4a4a4a] bg-[#cacaca] px-[17px]">
        <div className="flex h-[42px] items-center pl-[1px]">
          <Ico>
            <path d="M2 13L11 1.500l3.500 2.500L6 14.500H3z" fill="#d8b064" stroke="#8a6a3a" />
            <path d="M2 12l2.500-3.500L8 11.500 5.500 14.500H3z" fill="#c88" stroke="#555" />
            <path d="M9 5l3 3" stroke="#2d4e8c" strokeWidth="2.500" />
          </Ico>
          <Ico className="ml-[7px]">
            <circle cx="7" cy="8.500" r="5.800" fill="#cdbf9d" stroke="#444" strokeWidth="1.300" />
            <path d="M7 5v4h4" />
            <path d="M9 9l5-7 2 1.500-4 7z" fill="#d9d3c5" stroke="#777" />
          </Ico>
          <Ico className="ml-[7px]">
            <path d="M1 4.500l5-3 9 7-5 6H3z" fill="#d8c98a" stroke="#8a8046" />
            <path d="M4 4.500h6l3 3v6H4z" fill="#a7c3d2" stroke="#3c627a" />
            <circle cx="8" cy="9" r="2" stroke="#333" />
          </Ico>
          <div className="mx-[7px] h-[20px] w-px bg-[#999]" />
          <Ico>
            <path d="M1.500 2l6 6M7.500 2l-6 6" stroke="#a01616" strokeWidth="2" />
            <path d="M8 5l7 6-3 .5 2 3.500-2 .5-1.500-3.500L8.500 14z" fill="#ddd" />
          </Ico>
          <Ico w={17} className="ml-[7px]">
            <path d="M0 3.500h3M14 3.500h3" stroke="#173f73" strokeWidth="3" />
            <path d="M4 3.500h9" stroke="#3b6e9d" strokeDasharray="1.500 1" />
            <path d="M.5 7.500h16v4H.5z" fill="#d9a637" stroke="#6b511a" />
            <path d="M3.500 8v2M6.500 8v2M9.500 8v2M12.500 8v2" stroke="#4d3a10" />
          </Ico>
          <Ico w={17} className="ml-[7px]">
            <path d="M.5 14.500H16M.5 14.500L9 3M8 2c4 2 7 6 7.500 11" stroke="#111" strokeWidth="1.200" />
            <path d="M6 1l5 0-2 4zM13 10l4 .5-1.500 3.500z" fill="#111" stroke="none" />
          </Ico>
          <Ico className="ml-[6px]">
            <path d="M.5 1l5.500 5M15.500 1L10 6M.5 15L6 10M15.500 15L10 10" stroke="#111" strokeWidth="1.400" />
            <path d="M5.500 5.500h5v5h-5z" fill="#9fc4e0" stroke="#1d5c93" />
          </Ico>
          <div className="mx-[7px] h-[20px] w-px bg-[#999]" />
          <Ico>
            <rect x=".5" y=".5" width="15" height="14" rx="1" fill="#22508a" stroke="#1a3560" />
            <text x="4.500" y="12" fontSize="12" fontWeight="bold" fontFamily="Liberation Sans" fill="#e5e5e5" stroke="none">
              ?
            </text>
          </Ico>
        </div>
        <div className="h-[60px] w-[246px] border border-[#748696] bg-[#d5d5d5]" />
        <div className="mt-[3px] h-[20px] w-[246px] border border-[#868686] bg-[#d5d5d5] pl-[2px] text-[12px] leading-[18px] font-bold">
          0
        </div>
        <div className="mt-[10px] flex h-[22px] justify-between pr-[1px]">
          <span className="pt-[1px] leading-[14px] tracking-[-0.25px]">Basic Calculator Mode</span>
          <Ico w={20} h={20}>
            <circle cx="10" cy="10" r="9" fill="#a9bccb" stroke="#1d2f40" strokeWidth="1.500" />
            <path d="M5.500 8l4.500 4L14.500 8" stroke="#0c0c0c" strokeWidth="3" />
          </Ico>
        </div>
      </div>
      <div className="flex w-[24px] flex-col items-center pt-[5px]">
        <SideIcons flip />
        <div className="mt-[23px] h-[66px] -rotate-180 text-[12px] leading-[14px] font-bold tracking-[0.15px] [writing-mode:vertical-rl]">
          QuickCalc
        </div>
        <Ico w={11} h={14} className="mt-[11px]">
          <path d="M.5.5h9v13h-9z" fill="#d8d8d8" stroke="#333" />
          <path d="M2 2.500h6M2 6h6M2 8.500h6M2 11h6" stroke="#333" strokeDasharray="1.300 1" />
          <path d="M2 3h6" strokeWidth="2" />
        </Ico>
      </div>
    </div>
  );
}

/* ------------------ DRAWING AREA ------------------ */
function Canvas() {
  return (
    <main className="relative mr-[6px] ml-[5px] h-[460px] border-l border-[#555] bg-black">
      <Ico w={50} h={12} className="absolute top-[8px] left-[1208px]">
        <path d="M0 8h10v3H0z" fill="#cfcfcf" stroke="none" />
        <path d="M22.500 3V1.500h6v6h-2M20.500 4h6v6h-6z" stroke="#cfcfcf" strokeWidth="1.500" />
        <path d="M40.500 2l7.500 7.500M48 2l-7.500 7.500" stroke="#cfcfcf" strokeWidth="2" />
      </Ico>

      <div className="absolute top-[178px] left-0 w-[1267px] text-center font-['Liberation_Sans',Arial,sans-serif] text-[24px] leading-[28px] text-[#131313]">
        if you enjoyed this tip - please visit
        <br />
        http://cadsetterout.com/
      </div>
      <div className="absolute top-[186px] left-[259px] font-['Liberation_Sans',Arial,sans-serif] text-[52px] leading-[60px] font-bold tracking-[-0.12px] whitespace-nowrap text-[#d9d9d9]">
        I Want it to stay just how I set it!
      </div>

      <Ico w={36} h={36} className="absolute top-[418px] left-[8px]">
        <path d="M3.500 6v22M6 30.500h20" stroke="#ccc" />
        <path d="M1.500 28.500h4v4h-4zM3.500 5l-2 4h4zM25 28.500v4l-4-2zM31 28.500l4 4M35 28.500l-4 4M2 0l2 3 2-3" stroke="#ccc" strokeWidth=".8" />
      </Ico>

      <ToolPalette />
      <QuickCalc />
    </main>
  );
}

/* ------------------ LAYOUT TABS ------------------ */
const NAV_PATHS = ["M3 4v8M11 4v8L5 8z", "M10 4v8L4 8z", "M4 4v8l6-4z", "M4 4v8l6-4zM12 4v8"];

function LayoutTabs() {
  return (
    <div className="mx-[5px] flex h-[18px] border-b border-[#d2d2d2] bg-[#b2b2b2] font-['Liberation_Sans',sans-serif] text-[11.5px] tracking-[-0.2px] text-[#111]">
      {NAV_PATHS.map((d) => (
        <div key={d} className="flex h-[17px] w-[15.5px] items-center justify-center border-r border-[#8d8d8d] bg-[#adadad]">
          <Ico w={14} h={15}>
            <path d={d} fill="#858585" stroke="#858585" />
          </Ico>
        </div>
      ))}
      <div className="flex h-[17px] w-[53px] items-center justify-center bg-black pt-[1px] text-[#dedede] [clip-path:polygon(0_0,100%_0,46px_100%,6px_100%)]">
        Model
      </div>
      <div className="w-[45px] pl-[1px] text-center leading-[18px]">Layout1</div>
      <Ico w={8} h={17}>
        <path d="M7.500 0L1 17" stroke="#333" />
      </Ico>
      <div className="w-[47px] text-center leading-[18px]">Layout2</div>
      <Ico w={8} h={17}>
        <path d="M7.500 0L1 17" stroke="#333" />
      </Ico>
    </div>
  );
}

/* ------------------ COMMAND LINE ------------------ */
function CommandLine() {
  return (
    <div className="mx-[5px] flex h-[63px] border-t-4 border-[#8d8d8d] bg-[#8a8a8a] font-['Liberation_Mono',monospace] text-[13.33px] whitespace-pre text-black">
      <div className="w-[15px] pt-[2px]">
        <Ico w={12} h={6} className="ml-[1px]">
          <path d="M0 .5h12M0 2.500h12M0 4.500h12" stroke="#444" strokeDasharray="1 1" />
        </Ico>
      </div>
      <div className="flex flex-1 flex-col">
        <div className="flex h-[40px] border-b border-[#777]">
          <div className="flex-1 rounded-tl-[3px] bg-[#d6d6d6] pt-[1px] pl-[1px] leading-[16px]">
            {"Command: '_LOCKUI\nEnter new value for LOCKUI <15>: 0"}
          </div>
          <div className="flex w-[9px] flex-col justify-between bg-[#bdbdc4] font-sans">
            <Ico w={8} h={9}>
              <path d="M.5.5h7v8h-7z" fill="#ccc" stroke="#888" />
              <path d="M2 5.500h4L4 3z" fill="#111" stroke="none" />
            </Ico>
            <Ico w={8} h={20}>
              <path d="M.5.5h7v8h-7zM.5 10.500h7v9h-7z" fill="#ccc" stroke="#888" />
              <path d="M2 13.500h4L4 16z" fill="#111" stroke="none" />
            </Ico>
          </div>
        </div>
        <div className="flex h-[19px] bg-[#d6d6d6]">
          <div className="flex-1 pl-[1px] leading-[22px]">Command:</div>
          <Ico w={39} h={17} className="mt-[1px]">
            <path d="M.5.5h9v15h-9zM11.500.5h7v15h-7zM28.500.5h9v15h-9z" fill="#c4c4cc" stroke="#8a8a90" />
            <path d="M7 4L3.500 8 7 12M31 4l3.500 4L31 12" stroke="#111" strokeWidth="2" />
          </Ico>
          <div className="w-[9px] bg-[#b5b5bb]" />
        </div>
      </div>
    </div>
  );
}

/* The I-beam rests over the command history */
function TextCursor() {
  return (
    <Ico w={7} h={17} className="absolute top-[647px] left-[1120px]">
      <path d="M0 .5h2.500l1 1 1-1H7M3.500 1v15M0 16.500h2.500l1-1 1 1H7" stroke="#111" />
    </Ico>
  );
}

/* ------------------ STATUS BAR ------------------ */
const TOGGLES: { icon: ReactNode; on?: boolean }[] = [
  {
    icon: (
      <>
        <path d="M.5.5h15v15H.5z" fill="#ddd" />
        <path d="M3.500 0v16M6.500 0v16M9.500 0v16M12.500 0v16M0 3.500h16M0 6.500h16M0 9.500h16M0 12.500h16" stroke="#333" />
      </>
    ),
  },
  { icon: <path d="M1.500 0v14.500H16M1.500 9.500h5v5" stroke="#333" /> },
  {
    on: true,
    icon: (
      <>
        <circle cx="7" cy="9" r="5" />
        <path d="M6 9l8-6M6 9h9M12 5v4" />
      </>
    ),
  },
  {
    on: true,
    icon: (
      <>
        <path d="M3.500 3.500h12v11h-12z" fill="#d5dadb" />
        <circle cx="3" cy="3" r="2" fill="#ddd" stroke="#9c6a4b" />
      </>
    ),
  },
  { on: true, icon: <path d="M13 2L3 12.500h11M9 6c2 1 3 3 3 6" strokeWidth="1.200" /> },
  { icon: <path d="M2 6.500h9M6.500 2v9M8.500 8.500h6v4h-6z" strokeWidth="1.500" /> },
  { icon: <path d="M2 8.500h13M8.500 2v13" stroke="#111" strokeWidth="1.800" /> },
  {
    icon: (
      <>
        <path d="M4.500 2.500h8v11h-8z" fill="#ddd" />
        <path d="M6 5.500h5M6 8h5M6 10.500h5" stroke="#222" strokeDasharray="1.500 .8" strokeWidth="1.300" />
      </>
    ),
  },
];

const Scale = () => <path d="M7 1.500h2l1 6 5 5.500-5-1.500L8 10l-2 1.500L1 13l5-5.500z" fill="#d9d9d9" stroke="#222" />;

function StatusBtn({ className, children }: { className: string; children: ReactNode }) {
  return (
    <div className={`flex h-full items-center justify-center border-r border-[#555] bg-[linear-gradient(#a5a5a5,#8c8c8c)] ${className}`}>
      {children}
    </div>
  );
}

function StatusBar() {
  return (
    <footer className="mx-[5px] flex h-[22px] border-t border-[#222] bg-[linear-gradient(#c9c9cc,#a3a3a8)] font-['Liberation_Sans',sans-serif] text-[12px] whitespace-nowrap text-[#111]">
      <div className="w-[195px] pl-[11px] leading-[22px] tracking-[-0.58px]">1644.0853, 1352.1860, 0.0000</div>
      <div className="flex border-l border-[#555]">
        {TOGGLES.map((t, i) => (
          <div
            key={i}
            className={`flex w-[22px] items-center justify-center border-r border-[#555] ${
              t.on ? "bg-[linear-gradient(#93b5bf,#7ba3af)]" : "bg-[#929292]"
            }`}
          >
            <Ico>{t.icon}</Ico>
          </div>
        ))}
      </div>
      <div className="w-[410px] border-r border-[#555] bg-[linear-gradient(90deg,#d5d5d8,transparent_15%)]" />
      <StatusBtn className="w-[44px] tracking-[-0.6px]">MODEL</StatusBtn>
      <StatusBtn className="w-[22px]">
        <Ico>
          <path d="M1.500.5h11v11h-11z" fill="#ddd" />
          <path d="M4 3v6h6zM0 14.500h15" strokeWidth="1.500" />
        </Ico>
      </StatusBtn>
      <StatusBtn className="w-[22px]">
        <Ico>
          <path d="M.5 1.500h6.500v8H.5zM9 1.500h6.500v8H9z" fill="#ddd" />
          <path d="M0 13h16" strokeWidth="3" stroke="#444" />
        </Ico>
      </StatusBtn>
      <div className="w-[11px] border-r border-[#555]" />
      <StatusBtn className="w-[23px]"><Pan /></StatusBtn>
      <StatusBtn className="w-[22px]">
        <Ico>
          <circle cx="6" cy="6" r="5" fill="#c5d0d2" stroke="#eee" strokeWidth="1.500" />
          <path d="M10 10l5 5" strokeWidth="2.500" />
        </Ico>
      </StatusBtn>
      <div className="w-[12px] border-r border-[#555]" />
      <StatusBtn className="w-[51px] gap-[3px] pr-[10px]">
        <Ico><Scale /></Ico>
        1:1
      </StatusBtn>
      <StatusBtn className="w-[22px]">
        <Ico>
          <Scale />
          <circle cx="12" cy="10" r="3" fill="#e8b04a" stroke="#a8701c" />
        </Ico>
      </StatusBtn>
      <StatusBtn className="w-[22px]">
        <Ico className="opacity-50">
          <Scale />
          <path d="M10 1l-4 6h4l-2 6" stroke="#eee" />
        </Ico>
      </StatusBtn>
      <div className="w-[6px] border-r border-[#555]" />
      <StatusBtn className="w-[153px] gap-[2px] pr-[14px]">
        <Ico>
          <circle cx="8" cy="8" r="6.500" fill="#d5d5d5" stroke="#333" strokeDasharray="2 1.400" strokeWidth="2" />
          <circle cx="8" cy="8" r="5.500" fill="#d5d5d5" stroke="#555" />
          <circle cx="8" cy="8" r="2.500" fill="#888" />
        </Ico>
        <span className="tracking-[-0.55px]">2D Drafting &amp; Annotation</span>
      </StatusBtn>
      <StatusBtn className="w-[22px]">
        <Ico>
          <path d="M1.500 7.500h9v7h-9z" fill="#ddd" />
          <path d="M9.500 7V3c0-3 5-3 5 0v3M6 9v3" strokeWidth="1.500" />
        </Ico>
      </StatusBtn>
      <StatusBtn className="w-[38px]">
        <div className="flex h-[16px] w-[24px] items-center justify-center bg-[#737373]">
          <Ico w={12}>
            <path d="M2 5c0-6 8-6 8 0 0 2-2 3-2 5H4C4 8 2 7 2 5z" fill="#e3dc9c" stroke="#b0a862" />
            <path d="M4 11h4v3H4z" fill="#444" stroke="none" />
          </Ico>
        </div>
      </StatusBtn>
      <StatusBtn className="w-[9px]"><Caret /></StatusBtn>
      <Ico w={9} h={14} className="mt-[6px]">
        <path d="M1 11.500h7M4 7.500h4M7 3.500h1" stroke="#eee" strokeWidth="2" strokeDasharray="2 1.500" />
      </Ico>
    </footer>
  );
}

export default function App() {
  return (
    <div className="relative flex h-[720px] w-[1280px] flex-col overflow-hidden bg-[linear-gradient(90deg,#303030,#777_4px,#777_1274px,#2c2c2c)] font-['DejaVu_Sans_Condensed','Noto_Sans',sans-serif]">
      <Header />
      <Ribbon />
      <Canvas />
      <LayoutTabs />
      <CommandLine />
      <StatusBar />
      <div className="h-[3px] bg-[#3b3b3b]" />
      <TextCursor />
    </div>
  );
}
